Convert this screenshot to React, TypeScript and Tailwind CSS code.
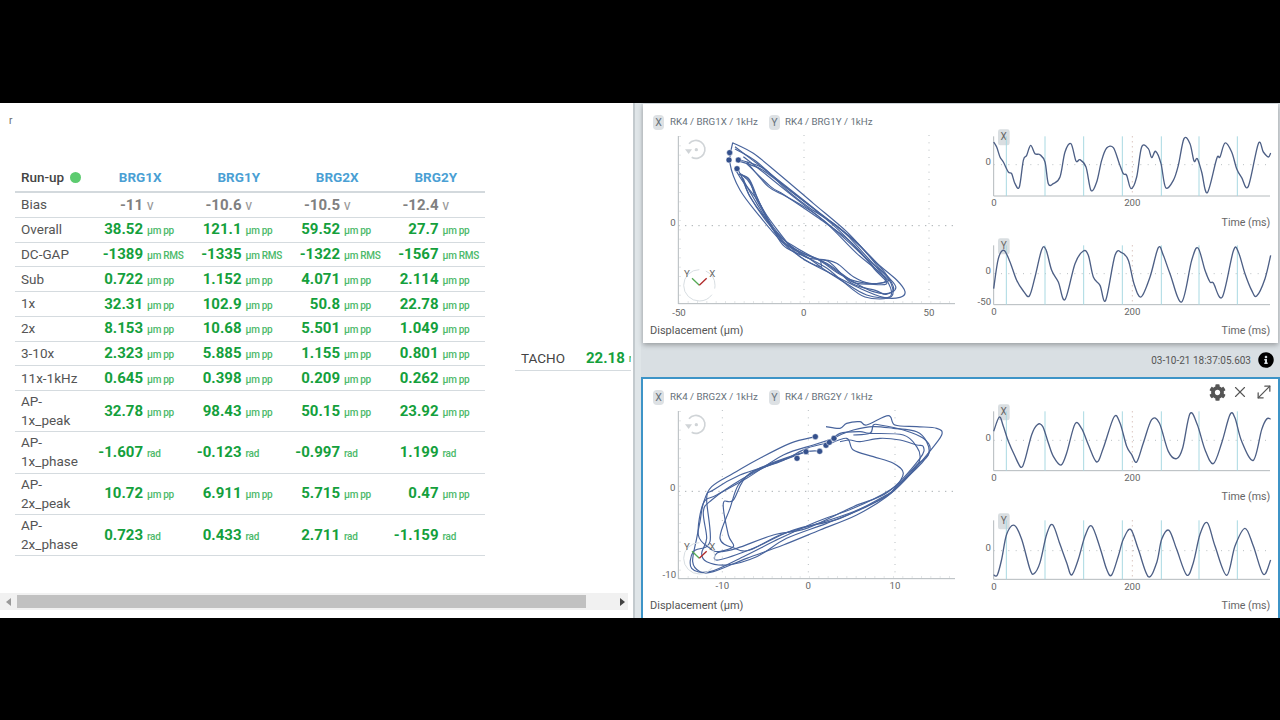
import React from "react";
import { FaCog, FaInfoCircle } from "react-icons/fa";
import { MoveDiagonal, X } from "lucide-react";

type Cell = [string, string];
type Row = { label: string; tall?: boolean; grey?: boolean; cells: Cell[] };

const pp = "µm pp";
const rows: Row[] = [
  { label: "Bias", grey: true, cells: [["-11", "V"], ["-10.6", "V"], ["-10.5", "V"], ["-12.4", "V"]] },
  { label: "Overall", cells: [["38.52", pp], ["121.1", pp], ["59.52", pp], ["27.7", pp]] },
  { label: "DC-GAP", cells: [["-1389", "µm RMS"], ["-1335", "µm RMS"], ["-1322", "µm RMS"], ["-1567", "µm RMS"]] },
  { label: "Sub", cells: [["0.722", pp], ["1.152", pp], ["4.071", pp], ["2.114", pp]] },
  { label: "1x", cells: [["32.31", pp], ["102.9", pp], ["50.8", pp], ["22.78", pp]] },
  { label: "2x", cells: [["8.153", pp], ["10.68", pp], ["5.501", pp], ["1.049", pp]] },
  { label: "3-10x", cells: [["2.323", pp], ["5.885", pp], ["1.155", pp], ["0.801", pp]] },
  { label: "11x-1kHz", cells: [["0.645", pp], ["0.398", pp], ["0.209", pp], ["0.262", pp]] },
  { label: "AP-1x_peak", tall: true, cells: [["32.78", pp], ["98.43", pp], ["50.15", pp], ["23.92", pp]] },
  { label: "AP-1x_phase", tall: true, cells: [["-1.607", "rad"], ["-0.123", "rad"], ["-0.997", "rad"], ["1.199", "rad"]] },
  { label: "AP-2x_peak", tall: true, cells: [["10.72", pp], ["6.911", pp], ["5.715", pp], ["0.47", pp]] },
  { label: "AP-2x_phase", tall: true, cells: [["0.723", "rad"], ["0.433", "rad"], ["2.711", "rad"], ["-1.159", "rad"]] },
];

// catmull-rom through flat x,y list
function smooth(p: number[]) {
  const pts: [number, number][] = [];
  for (let i = 0; i < p.length; i += 2) pts.push([p[i], p[i + 1]]);
  let d = `M${pts[0][0]} ${pts[0][1]}`;
  for (let i = 0; i < pts.length - 1; i++) {
    const a = pts[Math.max(i - 1, 0)];
    const b = pts[i];
    const c = pts[i + 1];
    const e = pts[Math.min(i + 2, pts.length - 1)];
    const c1x = b[0] + (c[0] - a[0]) / 6;
    const c1y = b[1] + (c[1] - a[1]) / 6;
    const c2x = c[0] - (e[0] - b[0]) / 6;
    const c2y = c[1] - (e[1] - b[1]) / 6;
    d += ` C${c1x.toFixed(1)} ${c1y.toFixed(1)} ${c2x.toFixed(1)} ${c2y.toFixed(1)} ${c[0]} ${c[1]}`;
  }
  return d;
}

const wobble = (l: number[], amp: number, k: number) =>
  l.map((v, i) => Math.round(v + Math.sin(i * k) * amp));

const orbit1Base = [
  [278,128,340,160,420,225,520,310,620,395,700,480,770,540,795,575,780,592,730,592,660,565,570,520,480,470,420,420,360,350,300,270,270,190,278,128],
  [285,140,350,190,440,260,540,340,640,420,720,500,760,560,745,580,700,575,640,545,560,490,500,465,430,425,380,360,330,290,305,230],
  [310,170,380,225,460,290,560,370,650,460,735,530,740,545,690,550,640,530,590,490,545,480,540,500,480,470,420,400,370,330,330,250,305,225],
  [300,180,370,205,440,270,510,325,600,385,680,470,740,540,750,590,680,585,610,545,555,510,500,470,440,435,400,390,350,310,310,240,292,205],
  [320,185,385,260,440,290,530,345,630,430,710,510,735,545,650,550,600,520,540,480,470,450,410,395,350,300,330,245,300,220],
];
const orbit1 = [...orbit1Base, wobble(orbit1Base[1], 7, 1.7), wobble(orbit1Base[3], 6, 2.3), wobble(orbit1Base[4], 7, 1.1)];

const orbit2 = [
  [527,185,450,205,350,255,280,295,215,335,190,385,180,440,170,490,158,560,180,590,220,590,320,550,430,510,540,465,650,420,740,365,800,310,860,240,905,180,890,160,830,155,765,150,745,122,680,150,660,140,620,145,600,160,558,155],
  [470,240,400,265,310,310,215,375,190,410,200,490,185,535,200,560,260,570,350,545,440,490,560,445,680,395,755,350,830,270,865,240,860,200,830,170,760,160,700,155,640,165,600,180,582,190],
  [498,230,430,255,340,290,295,330,270,400,240,490,285,520,330,525,420,480,520,450,640,410,745,360,820,285,840,250,830,215,790,180,690,175,660,170,600,175,568,203],
  [540,228,480,235,330,295,280,375,250,385,265,480,280,515,230,535,235,555,340,520,460,465,600,430,730,365,760,345,790,295,760,265,700,245,640,225,620,190,560,210],
  [582,190,520,210,430,240,320,310,230,360,190,385,175,480,210,520,235,530,290,520,400,480,500,460,640,395,745,350,840,250,850,215,830,210,780,195,720,190,660,200,630,195,600,200],
  [568,203,500,220,420,260,300,300,220,345,200,370,210,500,160,530,155,580,210,590,310,545,420,490,530,440,640,400,750,345,830,280,870,225,850,190,790,165,720,150,700,150,690,175,640,180],
];

const x1 = [101,125,110,140,120,170,130,185,145,215,155,220,165,250,178,260,190,180,200,165,212,135,225,160,240,163,255,185,265,250,280,250,300,230,315,155,333,130,348,182,360,178,378,200,393,270,410,245,425,180,440,143,460,142,478,190,490,220,500,225,513,265,530,230,545,140,565,145,575,172,587,153,603,190,617,262,640,240,655,195,672,115,690,130,702,182,712,175,725,215,742,277,770,175,780,170,795,128,815,155,830,205,845,232,865,258,895,130,910,155,925,170,932,158];
const y1 = [101,565,115,475,132,450,150,485,170,540,190,572,208,587,225,530,245,448,258,448,275,510,295,545,315,598,345,490,370,452,385,465,400,530,420,555,437,600,465,465,485,457,505,480,522,550,543,590,570,530,595,442,610,465,630,520,665,605,695,480,714,443,735,510,750,545,760,548,787,590,820,452,835,455,855,520,875,570,890,587,915,535,932,465];
const x2 = [101,165,118,122,130,150,145,195,165,240,183,273,195,250,215,175,232,145,248,150,265,200,280,240,303,266,320,230,345,143,365,157,385,205,410,257,430,215,462,122,480,140,500,210,515,235,530,257,550,200,575,130,598,140,625,225,650,247,668,215,690,112,712,145,735,220,760,262,785,200,810,115,825,125,845,195,880,252,905,160,920,128,932,128];
const y2 = [101,597,112,597,125,550,140,475,163,448,185,490,210,580,222,593,240,560,260,475,278,446,300,505,320,560,335,597,355,550,375,480,395,450,420,515,440,580,455,597,475,540,490,490,512,460,535,520,565,602,590,560,605,490,627,463,650,520,680,597,700,560,720,475,742,440,765,510,800,598,825,510,855,457,880,510,910,595,932,552];

const markers = [139, 255, 371, 487, 604, 717, 832];
const lineColor = "#47639c";
const tickText = "fill-[#666666] text-[29px]";

function Orbit({
  loops,
  dots,
  gridX,
  gridY,
  labels,
  compass,
}: {
  loops: number[][];
  dots: [number, number][];
  gridX: number[];
  gridY: number;
  labels: { x: number; y: number; t: string; anchor?: "middle" | "end" }[];
  compass: [number, number];
}) {
  const [cx, cy] = compass;
  return (
    <svg width="317" height="190" viewBox="9 90 951 570" className="block">
      {gridX.map((x) => (
        <line key={x} x1={x} x2={x} y1="105" y2="610" stroke="#b9bfc2" strokeWidth="3" strokeDasharray="3 19" />
      ))}
      <line x1="115" x2="940" y1={gridY} y2={gridY} stroke="#a9afb2" strokeWidth="3" strokeDasharray="4 16" />
      <line x1="115" x2="115" y1="108" y2="612" stroke="#b4babd" strokeWidth="3" />
      <line x1="115" x2="945" y1="611" y2="611" stroke="#b4babd" strokeWidth="3" />
      <line x1="120" x2="120" y1="108" y2="610" stroke="#c8cdd0" strokeWidth="3" strokeDasharray="3 25" />
      <line x1="115" x2="945" y1="606" y2="606" stroke="#c8cdd0" strokeWidth="3" strokeDasharray="3 25" />
      <path d="M147 131 A27 27 0 1 1 155 172" fill="none" stroke="#d0d4d7" strokeWidth="5" />
      <path d="M135 148 L156 148 L146 162 Z" fill="#d0d4d7" />
      <circle cx="169" cy="149" r="5" fill="#d0d4d7" />
      {loops.map((l, i) => (
        <path key={i} d={smooth(l)} fill="none" stroke={lineColor} strokeWidth="3.5" />
      ))}
      {dots.map(([x, y]) => (
        <circle key={`${x}-${y}`} cx={x} cy={y} r="9" fill="#34508c" stroke="#ffffff" strokeWidth="1.5" />
      ))}
      <circle cx={cx} cy={cy} r="47" fill="none" stroke="#d8dee2" strokeWidth="3" strokeDasharray="190 20" strokeDashoffset="-30" />
      <path d={`M${cx - 22} ${cy - 21} L${cx} ${cy}`} stroke="#55aa55" strokeWidth="4" />
      <path d={`M${cx} ${cy} L${cx + 22} ${cy - 21}`} stroke="#b02a2a" strokeWidth="4" />
      <text x={cx - 37} y={cy - 24} textAnchor="middle" className={tickText}>Y</text>
      <text x={cx + 39} y={cy - 24} textAnchor="middle" className={tickText}>X</text>
      {labels.map((l) => (
        <text key={`${l.x}-${l.y}`} x={l.x} y={l.y} textAnchor={l.anchor ?? "middle"} className={tickText}>{l.t}</text>
      ))}
    </svg>
  );
}

function Wave({
  pts,
  top,
  bottom,
  zero,
  badge,
  low,
}: {
  pts: number[];
  top: number;
  bottom: number;
  zero: number;
  badge: string;
  low?: boolean;
}) {
  return (
    <svg width="318" height="104" viewBox={`0 ${top - 28} 954 312`} className="block">
      <rect x="114" y={top - 21} width="35" height="48" rx="7" fill="#d9dee1" />
      <text x="131" y={top + 12} textAnchor="middle" className="fill-[#666666] text-[30px]">{badge}</text>
      <line x1="101" x2="101" y1={top} y2={bottom} stroke="#b4babd" strokeWidth="3" />
      <line x1="101" x2="930" y1={bottom} y2={bottom} stroke="#b4babd" strokeWidth="3" />
      <line x1="101" x2="930" y1={zero} y2={zero} stroke="#b9bfc2" strokeWidth="3" strokeDasharray="3 19" />
      <line x1="517" x2="517" y1={top} y2={bottom} stroke="#c9a9a0" strokeWidth="3" strokeDasharray="3 12" />
      {markers.map((x) => (
        <line key={x} x1={x} x2={x} y1={top} y2={bottom} stroke="#a9d9e2" strokeWidth="3" />
      ))}
      <path d={smooth(pts)} fill="none" stroke="#4d5f85" strokeWidth="4" />
      <text x="85" y={zero + 2} textAnchor="middle" className={tickText}>0</text>
      {low && <text x="73" y={bottom + 1} textAnchor="middle" className={tickText}>-50</text>}
      <text x="102" y={bottom + 31} textAnchor="middle" className={tickText}>0</text>
      <text x="517" y={bottom + 31} textAnchor="middle" className={tickText}>200</text>
      <text x="931" y={bottom + 89} textAnchor="end" className="fill-[#666666] text-[32px]">Time (ms)</text>
    </svg>
  );
}

function ChannelHeader({ x, y }: { x: string; y: string }) {
  return (
    <div className="flex items-center pl-[10px] h-[15px] text-[9.75px] text-[#66717a]">
      <span className="w-[11px] h-[15px] mr-[6px] flex items-center justify-center rounded-sm bg-[#dde1e4] text-[10.5px]">X</span>
      <span className="w-[99px]">{x}</span>
      <span className="w-[11px] h-[15px] mr-[5px] flex items-center justify-center rounded-sm bg-[#dde1e4] text-[10.5px]">Y</span>
      <span>{y}</span>
    </div>
  );
}

function Card({
  x,
  y,
  orbit,
  waves,
}: {
  x: string;
  y: string;
  orbit: React.ReactNode;
  waves: React.ReactNode;
}) {
  return (
    <div className="flex h-full">
      <div className="w-[317px] pt-[11px]">
        <ChannelHeader x={x} y={y} />
        {orbit}
        <div className="pl-[7px] mt-[3px] text-[11px] leading-4 text-[#555555]">Displacement (µm)</div>
      </div>
      <div className="w-[318px] pt-[23px] flex flex-col gap-[5px]">{waves}</div>
    </div>
  );
}

export default function App() {
  return (
    <div className="w-[1280px] h-[720px] overflow-hidden bg-black flex flex-col font-[Roboto,sans-serif]">
      <div className="h-[103px] shrink-0" />
      <div className="h-[515px] shrink-0 flex">
        {/* values panel */}
        <div className="w-[633px] bg-white flex flex-col">
          <div className="h-[490px] flex overflow-hidden">
            <div className="w-[515px] shrink-0 pl-[9px] pt-[11px]">
              <div className="text-[10px] leading-[14px] text-[#666666]">r</div>
              <div className="ml-[6px] mt-[38px] w-[470px]">
                <div className="flex items-center h-[27px] pb-[3px] border-b-2 border-[#d3d9dd]">
                  <div className="w-[76px] pl-[6px] flex items-center text-[13.5px] font-medium text-[#444444]">
                    Run-up
                    <span className="ml-[6px] w-[11px] h-[11px] rounded-full bg-[#5ccb6f]" />
                  </div>
                  {["BRG1X", "BRG1Y", "BRG2X", "BRG2Y"].map((h) => (
                    <div key={h} className="w-[98.5px] text-center text-[13.5px] font-bold text-[#4a9fd4]">{h}</div>
                  ))}
                </div>
                {rows.map((r) => (
                  <div
                    key={r.label}
                    className={`flex items-center border-b border-[#d5dbdf] ${r.tall ? "h-[41.25px]" : "h-[24.75px]"}`}
                  >
                    <div className="w-[76px] pl-[6px] pr-[10px] text-[13.5px] leading-[19px] text-[#555555]">{r.label}</div>
                    {r.cells.map(([v, u], i) => (
                      <div key={i} className="w-[98.5px] flex items-baseline">
                        <span className={`w-[52px] text-right text-[15px] font-bold ${r.grey ? "text-[#808080]" : "text-[#14a03c]"}`}>{v}</span>
                        <span className={`ml-[4px] text-[10px] font-medium tracking-[-0.3px] whitespace-nowrap ${r.grey ? "text-[#999999]" : "text-[#4cb96a]"}`}>{u}</span>
                      </div>
                    ))}
                  </div>
                ))}
              </div>
            </div>
            <div className="w-[116px] shrink-0 overflow-hidden pt-[243px]">
              <div className="flex items-center h-[25px] border-b border-[#d5dbdf] whitespace-nowrap">
                <span className="ml-[6px] w-[65px] shrink-0 text-[13.5px] text-[#444444]">TACHO</span>
                <span className="shrink-0 text-[15px] font-bold text-[#14a03c]">22.18</span>
                <span className="ml-[4px] shrink-0 text-[10px] font-medium text-[#4cb96a]">rpm</span>
              </div>
            </div>
          </div>
          <div className="h-[17px] w-[628px] bg-[#f1f1f1] flex items-center">
            <span className="w-[17px] flex justify-center">
              <span className="border-y-[4px] border-r-[5px] border-y-transparent border-r-[#9a9a9a]" />
            </span>
            <span className="w-[569px] h-[13px] bg-[#c1c1c1]" />
            <span className="flex-1 flex justify-end pr-[3px]">
              <span className="border-y-[4px] border-l-[5px] border-y-transparent border-l-[#444444]" />
            </span>
          </div>
        </div>
        {/* divider */}
        <div className="w-[8px] bg-[#dfe5e8] border-l-2 border-[#c3cace]" />
        {/* charts */}
        <div className="w-[639px] bg-[#d9dfe3] flex flex-col">
          <div className="h-[240px] pt-[1px] pl-[2px] pr-[2px]">
            <div className="h-[239px] bg-white shadow-[0_2px_5px_rgba(0,0,0,0.3)]">
              <Card
                x="RK4 / BRG1X / 1kHz"
                y="RK4 / BRG1Y / 1kHz"
                orbit={
                  <Orbit
                    loops={orbit1}
                    dots={[[269,158],[267,180],[295,180],[291,206]]}
                    gridX={[492,867]}
                    gridY={377}
                    compass={[178,556]}
                    labels={[
                      { x: 99, y: 377, t: "0" },
                      { x: 117, y: 648, t: "-50" },
                      { x: 491, y: 648, t: "0" },
                      { x: 867, y: 648, t: "50" },
                    ]}
                  />
                }
                waves={
                  <>
                    <Wave pts={x1} top={108} bottom={287} zero={193} badge="X" />
                    <Wave pts={y1} top={435} bottom={613} zero={520} badge="Y" low />
                  </>
                }
              />
            </div>
          </div>
          <div className="h-[34px] flex items-center justify-end pr-[6px] text-[10px] text-[#555555]">
            03-10-21 18:37:05.603
            <FaInfoCircle className="ml-[7px] text-black" size={16} />
          </div>
          <div className="relative flex-1 min-h-0 bg-white border-x-2 border-t-2 border-[#3d94c7]">
            <Card
              x="RK4 / BRG2X / 1kHz"
              y="RK4 / BRG2Y / 1kHz"
              orbit={
                <Orbit
                  loops={orbit2}
                  dots={[[526,185],[471,250],[498,230],[539,229],[558,211],[568,202],[582,190]]}
                  gridX={[247,505,765]}
                  gridY={349}
                  compass={[178,550]}
                  labels={[
                    { x: 98, y: 348, t: "0" },
                    { x: 88, y: 608, t: "-10" },
                    { x: 247, y: 642, t: "-10" },
                    { x: 505, y: 642, t: "0" },
                    { x: 765, y: 642, t: "10" },
                  ]}
                />
              }
              waves={
                <>
                  <Wave pts={x2} top={105} bottom={283} zero={192} badge="X" />
                  <Wave pts={y2} top={433} bottom={610} zero={524} badge="Y" />
                </>
              }
            />
            <div className="absolute top-[3px] right-[4px] flex items-center gap-[5px] text-[#555555]">
              <FaCog size={17} />
              <X size={18} strokeWidth={1.5} />
              <MoveDiagonal size={20} strokeWidth={1.5} />
            </div>
          </div>
        </div>
      </div>
    </div>
  );
}
